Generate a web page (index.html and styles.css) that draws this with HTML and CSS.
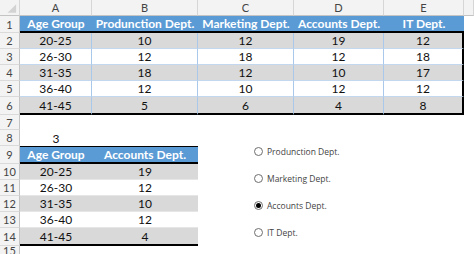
FILE: index.html
```html
<!DOCTYPE html>
<html>
<head>
<meta charset="utf-8">
<link rel="stylesheet" href="styles.css">
</head>
<body>
<div class="sheet">
  <div class="cell ch corner"><svg width="20" height="16" viewBox="0 0 20 16"><polygon points="17,4 17,13 8,13" fill="#d3d3d3"/></svg></div>
  <div class="cell ch">A</div><div class="cell ch">B</div><div class="cell ch">C</div><div class="cell ch">D</div><div class="cell ch">E</div><div class="cell ch"></div>

  <div class="cell rh">1</div>
  <div class="cell th">Age Group</div><div class="cell th">Produnction Dept.</div><div class="cell th">Marketing Dept.</div><div class="cell th">Accounts Dept.</div><div class="cell th">IT Dept.</div><div class="cell"></div>

  <div class="cell rh">2</div>
  <div class="cell td alt">20-25</div><div class="cell td alt">10</div><div class="cell td alt">12</div><div class="cell td alt">19</div><div class="cell td alt last">12</div><div class="cell"></div>

  <div class="cell rh">3</div>
  <div class="cell td">26-30</div><div class="cell td">12</div><div class="cell td">18</div><div class="cell td">12</div><div class="cell td last">18</div><div class="cell"></div>

  <div class="cell rh">4</div>
  <div class="cell td alt">31-35</div><div class="cell td alt">18</div><div class="cell td alt">12</div><div class="cell td alt">10</div><div class="cell td alt last">17</div><div class="cell"></div>

  <div class="cell rh">5</div>
  <div class="cell td">36-40</div><div class="cell td">12</div><div class="cell td">10</div><div class="cell td">12</div><div class="cell td last">12</div><div class="cell"></div>

  <div class="cell rh">6</div>
  <div class="cell td alt end">41-45</div><div class="cell td alt end">5</div><div class="cell td alt end">6</div><div class="cell td alt end">4</div><div class="cell td alt end last">8</div><div class="cell"></div>

  <div class="cell rh">7</div>
  <div class="cell"></div><div class="cell"></div><div class="cell"></div><div class="cell"></div><div class="cell"></div><div class="cell"></div>

  <div class="cell rh">8</div>
  <div class="cell plain">3</div><div class="cell"></div><div class="cell"></div><div class="cell"></div><div class="cell"></div><div class="cell"></div>

  <div class="cell rh">9</div>
  <div class="cell th th2">Age Group</div><div class="cell th th2">Accounts Dept.</div><div class="cell"></div><div class="cell"></div><div class="cell"></div><div class="cell"></div>

  <div class="cell rh">10</div>
  <div class="cell td2 alt">20-25</div><div class="cell td2 alt">19</div><div class="cell"></div><div class="cell"></div><div class="cell"></div><div class="cell"></div>

  <div class="cell rh">11</div>
  <div class="cell td2">26-30</div><div class="cell td2">12</div><div class="cell"></div><div class="cell"></div><div class="cell"></div><div class="cell"></div>

  <div class="cell rh">12</div>
  <div class="cell td2 alt">31-35</div><div class="cell td2 alt">10</div><div class="cell"></div><div class="cell"></div><div class="cell"></div><div class="cell"></div>

  <div class="cell rh">13</div>
  <div class="cell td2">36-40</div><div class="cell td2">12</div><div class="cell"></div><div class="cell"></div><div class="cell"></div><div class="cell"></div>

  <div class="cell rh">14</div>
  <div class="cell td2 alt end">41-45</div><div class="cell td2 alt end">4</div><div class="cell"></div><div class="cell"></div><div class="cell"></div><div class="cell"></div>

  <div class="cell rh">15</div>
  <div class="cell"></div><div class="cell"></div><div class="cell"></div><div class="cell"></div><div class="cell"></div><div class="cell"></div>

  <div class="radios">
    <div class="radio"><span class="dot"></span><span class="lbl">Produnction Dept.</span></div>
    <div class="radio"><span class="dot"></span><span class="lbl">Marketing Dept.</span></div>
    <div class="radio"><span class="dot on"></span><span class="lbl">Accounts Dept.</span></div>
    <div class="radio"><span class="dot"></span><span class="lbl">IT Dept.</span></div>
  </div>
</div>
</body>
</html>
```
FILE: styles.css
```css
html, body {
  margin: 0;
  padding: 0;
  background: #ffffff;
}

.sheet {
  position: relative;
  width: 474px;
  height: 254px;
  overflow: hidden;
  display: grid;
  grid-template-columns: 20px 72px 106px 96px 90px 80px 10px;
  grid-template-rows: 16px 17px 16px 16px 16px 16px 18px 15px 16px 18px 16px 16px 16px 16px 18px 10px;
  font-family: Lato, "Liberation Sans", sans-serif;
  font-size: 12px;
  color: #111;
}

.cell {
  box-sizing: border-box;
  display: flex;
  align-items: center;
  justify-content: center;
  white-space: nowrap;
  overflow: hidden;
  background: #ffffff;
}

.ch {
  background: #f3f3f3;
  border-right: 1px solid #d6d6d6;
  border-bottom: 1px solid #c4c4c4;
  color: #444;
  font-size: 11px;
}

.corner {
  padding: 0;
}

.rh {
  background: #f3f3f3;
  border-right: 1px solid #c4c4c4;
  border-bottom: 1px solid #dadada;
  color: #444;
  font-size: 11px;
}

.th {
  background: #5b9bd5;
  color: #ffffff;
  font-weight: bold;
  border-bottom: 2px solid #000;
}

.th2 {
  border-top: 1px solid #000;
}

.td {
  border-right: 1px solid #a9c8ea;
  border-bottom: 1px solid #c3d8ef;
}

.td2 {
  border-bottom: 1px solid #e6e6e6;
}

.alt {
  background: #d9d9d9;
}

.last {
  border-right: 2px solid #000;
}

.end {
  border-bottom: 2px solid #000;
}

.radios {
  position: absolute;
  left: 254px;
  top: 138px;
  display: flex;
  flex-direction: column;
  gap: 0;
}

.radio {
  height: 27px;
  display: flex;
  align-items: center;
}

.dot {
  box-sizing: border-box;
  width: 9px;
  height: 9px;
  border: 1px solid #6e6e6e;
  border-radius: 50%;
  background: #fff;
  display: flex;
  align-items: center;
  justify-content: center;
}

.dot.on::after {
  content: "";
  width: 5px;
  height: 5px;
  border-radius: 50%;
  background: #000;
}

.lbl {
  margin-left: 4px;
  font-family: "Open Sans", "Noto Sans", sans-serif;
  font-size: 8.5px;
  color: #444;
}
```
